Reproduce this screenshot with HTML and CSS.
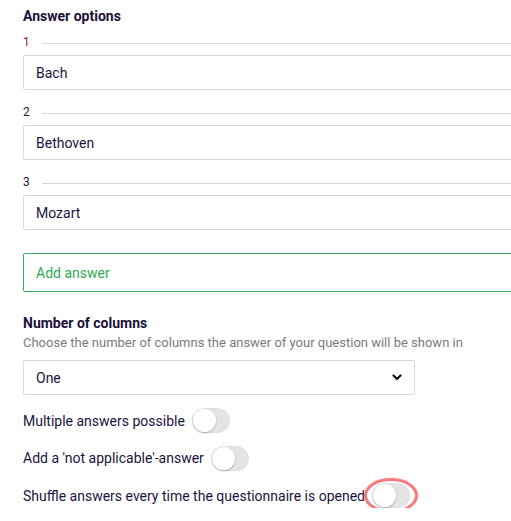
FILE: index.html
```html
<!DOCTYPE html>
<html lang="en">
<head>
<meta charset="utf-8">
<title>Answer options</title>
<link rel="stylesheet" href="styles.css">
</head>
<body>
<div class="page">
  <div class="heading">Answer options</div>
  <div class="answers">
    <div class="answer">
      <div class="answer-label"><span class="num num-active">1</span><span class="rule"></span></div>
      <div class="field">Bach</div>
    </div>
    <div class="answer">
      <div class="answer-label"><span class="num">2</span><span class="rule"></span></div>
      <div class="field">Bethoven</div>
    </div>
    <div class="answer">
      <div class="answer-label"><span class="num">3</span><span class="rule"></span></div>
      <div class="field">Mozart</div>
    </div>
  </div>
  <button class="add" type="button">Add answer</button>

  <div class="section">
    <div class="heading">Number of columns</div>
    <div class="hint">Choose the number of columns the answer of your question will be shown in</div>
    <div class="select">
      <span>One</span>
      <svg class="chevron" width="10" height="7" viewBox="0 0 10 7"><path d="M1.5 1.5 L5 5 L8.5 1.5" fill="none" stroke="#111" stroke-width="2.2" stroke-linecap="round" stroke-linejoin="round"/></svg>
    </div>
  </div>

  <div class="toggles">
    <div class="toggle-row"><span>Multiple answers possible</span><span class="switch"><span class="knob"></span></span></div>
    <div class="toggle-row"><span>Add a 'not applicable'-answer</span><span class="switch"><span class="knob"></span></span></div>
    <div class="toggle-row"><span>Shuffle answers every time the questionnaire is opened</span><span class="switch switch-marked"><span class="knob"></span></span></div>
  </div>
</div>
</body>
</html>
```

FILE: styles.css
```css
html, body {
  margin: 0;
  padding: 0;
  background: #ffffff;
  overflow: hidden;
}
body {
  font-family: Roboto, "Liberation Sans", Arial, sans-serif;
  font-size: 14px;
  color: #1c1340;
}
.page {
  width: 620px;
  padding: 6px 0 0 23px;
}
.heading {
  font-weight: 700;
  font-size: 14px;
  line-height: 20px;
  color: #1a1038;
}
.answers {
  margin-top: 6px;
  display: flex;
  flex-direction: column;
  gap: 12px;
}
.answer-label {
  display: flex;
  align-items: center;
  height: 20px;
  margin-bottom: 3px;
}
.num {
  width: 19px;
  font-size: 12px;
  color: #1c1340;
}
.num-active {
  color: #a3172a;
}
.rule {
  flex: 1;
  height: 1px;
  background: #d9d9dc;
  margin-top: 2px;
}
.field {
  height: 33px;
  border: 1px solid #d8d8db;
  border-radius: 2px;
  padding: 0 12px;
  display: flex;
  align-items: center;
  font-size: 14px;
}
.add {
  display: block;
  width: 100%;
  margin-top: 23px;
  height: 39px;
  border: 1px solid #3aaa5e;
  border-radius: 2px;
  background: #fff;
  text-align: left;
  padding: 0 12px;
  font-family: inherit;
  font-size: 14px;
  color: #2eaa52;
}
.section {
  margin-top: 21px;
}
.hint {
  font-size: 13px;
  line-height: 20px;
  color: #7a7a7e;
}
.select {
  margin-top: 7px;
  width: 366px;
  height: 33px;
  border: 1px solid #d8d8db;
  border-radius: 2px;
  padding: 0 12px;
  display: flex;
  align-items: center;
  justify-content: space-between;
}
.chevron {
  display: block;
}
.toggles {
  margin-top: 13px;
  display: flex;
  flex-direction: column;
  gap: 12.5px;
}
.toggle-row {
  display: flex;
  align-items: center;
  height: 25px;
  gap: 7px;
}
.switch {
  position: relative;
  width: 38px;
  height: 25px;
  box-sizing: border-box;
  border-radius: 13px;
  background: #e4e4e6;
  border: 1px solid #dedee1;
}
.knob {
  position: absolute;
  left: 0;
  top: 0;
  width: 23px;
  height: 23px;
  border-radius: 50%;
  background: #ffffff;
  box-shadow: 0 1px 2px rgba(0, 0, 0, 0.25);
}
.switch-marked::after {
  content: "";
  position: absolute;
  left: -9px;
  right: -9px;
  top: -6px;
  bottom: -6px;
  border: 3px solid #f27c7c;
  border-radius: 50%;
  box-shadow: 0 0 2px rgba(242, 124, 124, 0.6);
}
```
